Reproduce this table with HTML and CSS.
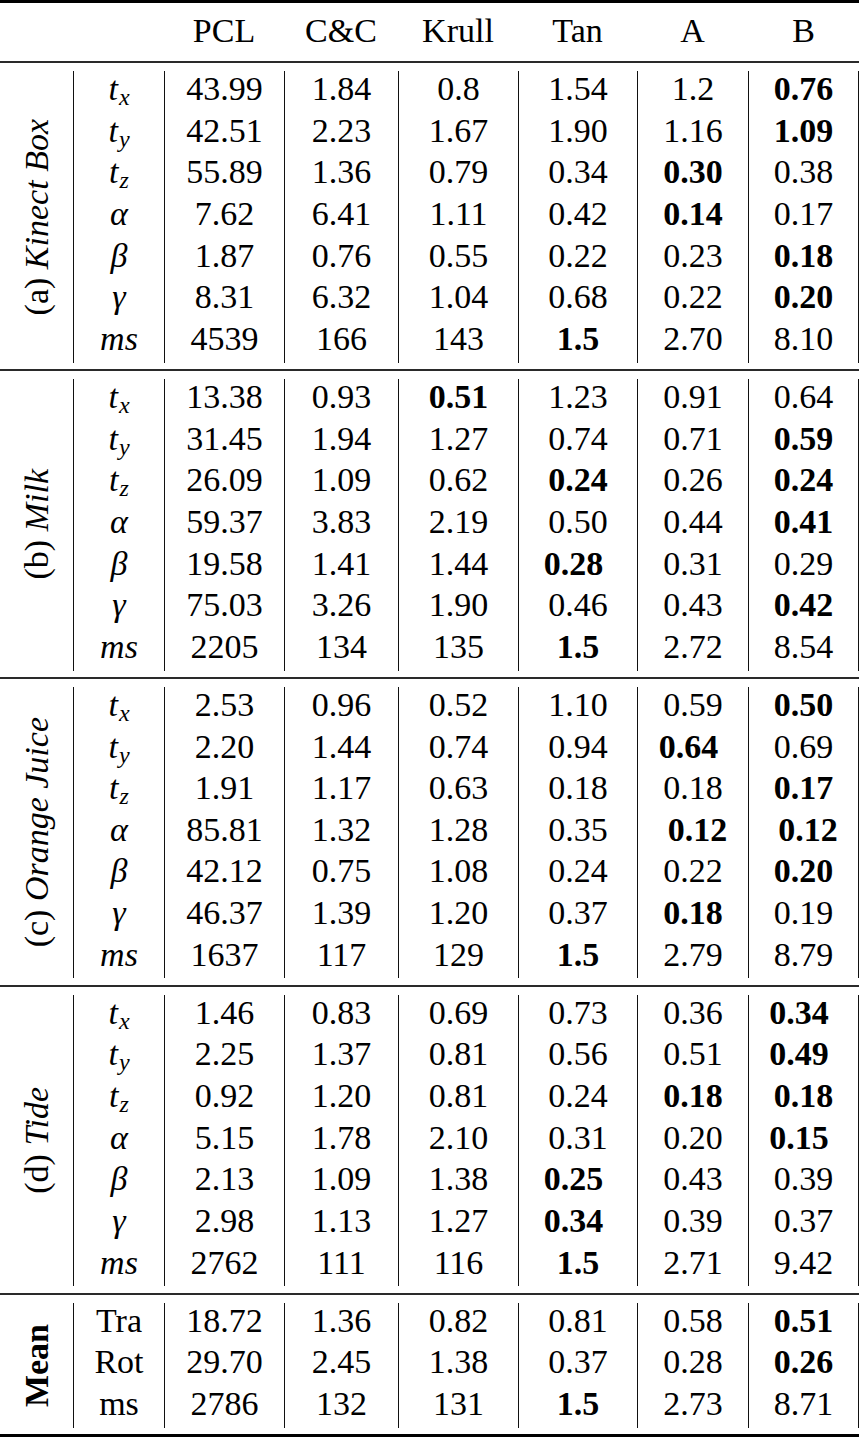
FILE: index.html
```html
<!DOCTYPE html>
<html lang="en">
<head>
<meta charset="utf-8">
<title>Pose error table</title>
<link rel="stylesheet" href="styles.css">
</head>
<body>
<div class="tbl">
  <div class="head">
    <div class="h"></div><div class="h"></div>
    <div class="h">PCL</div><div class="h">C&amp;C</div><div class="h">Krull</div>
    <div class="h">Tan</div><div class="h">A</div><div class="h">B</div>
  </div>

  <section class="grp">
    <div class="lab"><span class="rot">(a) <i>Kinect Box</i></span></div>
    <div class="col rl">
      <div class="c"><i>t</i><sub>x</sub></div><div class="c"><i>t</i><sub>y</sub></div><div class="c"><i>t</i><sub>z</sub></div>
      <div class="c"><i>α</i></div><div class="c"><i>β</i></div><div class="c"><i>γ</i></div><div class="c"><i>ms</i></div>
    </div>
    <div class="col"><div class="c">43.99</div><div class="c">42.51</div><div class="c">55.89</div><div class="c">7.62</div><div class="c">1.87</div><div class="c">8.31</div><div class="c">4539</div></div>
    <div class="col"><div class="c">1.84</div><div class="c">2.23</div><div class="c">1.36</div><div class="c">6.41</div><div class="c">0.76</div><div class="c">6.32</div><div class="c">166</div></div>
    <div class="col"><div class="c">0.8</div><div class="c">1.67</div><div class="c">0.79</div><div class="c">1.11</div><div class="c">0.55</div><div class="c">1.04</div><div class="c">143</div></div>
    <div class="col"><div class="c">1.54</div><div class="c">1.90</div><div class="c">0.34</div><div class="c">0.42</div><div class="c">0.22</div><div class="c">0.68</div><div class="c"><b>1.5</b></div></div>
    <div class="col"><div class="c">1.2</div><div class="c">1.16</div><div class="c"><b>0.30</b></div><div class="c"><b>0.14</b></div><div class="c">0.23</div><div class="c">0.22</div><div class="c">2.70</div></div>
    <div class="col last"><div class="c"><b>0.76</b></div><div class="c"><b>1.09</b></div><div class="c">0.38</div><div class="c">0.17</div><div class="c"><b>0.18</b></div><div class="c"><b>0.20</b></div><div class="c">8.10</div></div>
  </section>

  <section class="grp">
    <div class="lab"><span class="rot">(b) <i>Milk</i></span></div>
    <div class="col rl">
      <div class="c"><i>t</i><sub>x</sub></div><div class="c"><i>t</i><sub>y</sub></div><div class="c"><i>t</i><sub>z</sub></div>
      <div class="c"><i>α</i></div><div class="c"><i>β</i></div><div class="c"><i>γ</i></div><div class="c"><i>ms</i></div>
    </div>
    <div class="col"><div class="c">13.38</div><div class="c">31.45</div><div class="c">26.09</div><div class="c">59.37</div><div class="c">19.58</div><div class="c">75.03</div><div class="c">2205</div></div>
    <div class="col"><div class="c">0.93</div><div class="c">1.94</div><div class="c">1.09</div><div class="c">3.83</div><div class="c">1.41</div><div class="c">3.26</div><div class="c">134</div></div>
    <div class="col"><div class="c"><b>0.51</b></div><div class="c">1.27</div><div class="c">0.62</div><div class="c">2.19</div><div class="c">1.44</div><div class="c">1.90</div><div class="c">135</div></div>
    <div class="col"><div class="c">1.23</div><div class="c">0.74</div><div class="c"><b>0.24</b></div><div class="c">0.50</div><div class="c sl"><b>0.28</b></div><div class="c">0.46</div><div class="c"><b>1.5</b></div></div>
    <div class="col"><div class="c">0.91</div><div class="c">0.71</div><div class="c">0.26</div><div class="c">0.44</div><div class="c">0.31</div><div class="c">0.43</div><div class="c">2.72</div></div>
    <div class="col last"><div class="c">0.64</div><div class="c"><b>0.59</b></div><div class="c"><b>0.24</b></div><div class="c"><b>0.41</b></div><div class="c">0.29</div><div class="c"><b>0.42</b></div><div class="c">8.54</div></div>
  </section>

  <section class="grp">
    <div class="lab"><span class="rot">(c) <i>Orange Juice</i></span></div>
    <div class="col rl">
      <div class="c"><i>t</i><sub>x</sub></div><div class="c"><i>t</i><sub>y</sub></div><div class="c"><i>t</i><sub>z</sub></div>
      <div class="c"><i>α</i></div><div class="c"><i>β</i></div><div class="c"><i>γ</i></div><div class="c"><i>ms</i></div>
    </div>
    <div class="col"><div class="c">2.53</div><div class="c">2.20</div><div class="c">1.91</div><div class="c">85.81</div><div class="c">42.12</div><div class="c">46.37</div><div class="c">1637</div></div>
    <div class="col"><div class="c">0.96</div><div class="c">1.44</div><div class="c">1.17</div><div class="c">1.32</div><div class="c">0.75</div><div class="c">1.39</div><div class="c">117</div></div>
    <div class="col"><div class="c">0.52</div><div class="c">0.74</div><div class="c">0.63</div><div class="c">1.28</div><div class="c">1.08</div><div class="c">1.20</div><div class="c">129</div></div>
    <div class="col"><div class="c">1.10</div><div class="c">0.94</div><div class="c">0.18</div><div class="c">0.35</div><div class="c">0.24</div><div class="c">0.37</div><div class="c"><b>1.5</b></div></div>
    <div class="col"><div class="c">0.59</div><div class="c sl"><b>0.64</b></div><div class="c">0.18</div><div class="c sr"><b>0.12</b></div><div class="c">0.22</div><div class="c"><b>0.18</b></div><div class="c">2.79</div></div>
    <div class="col last"><div class="c"><b>0.50</b></div><div class="c">0.69</div><div class="c"><b>0.17</b></div><div class="c sr"><b>0.12</b></div><div class="c"><b>0.20</b></div><div class="c">0.19</div><div class="c">8.79</div></div>
  </section>

  <section class="grp">
    <div class="lab"><span class="rot">(d) <i>Tide</i></span></div>
    <div class="col rl">
      <div class="c"><i>t</i><sub>x</sub></div><div class="c"><i>t</i><sub>y</sub></div><div class="c"><i>t</i><sub>z</sub></div>
      <div class="c"><i>α</i></div><div class="c"><i>β</i></div><div class="c"><i>γ</i></div><div class="c"><i>ms</i></div>
    </div>
    <div class="col"><div class="c">1.46</div><div class="c">2.25</div><div class="c">0.92</div><div class="c">5.15</div><div class="c">2.13</div><div class="c">2.98</div><div class="c">2762</div></div>
    <div class="col"><div class="c">0.83</div><div class="c">1.37</div><div class="c">1.20</div><div class="c">1.78</div><div class="c">1.09</div><div class="c">1.13</div><div class="c">111</div></div>
    <div class="col"><div class="c">0.69</div><div class="c">0.81</div><div class="c">0.81</div><div class="c">2.10</div><div class="c">1.38</div><div class="c">1.27</div><div class="c">116</div></div>
    <div class="col"><div class="c">0.73</div><div class="c">0.56</div><div class="c">0.24</div><div class="c">0.31</div><div class="c sl"><b>0.25</b></div><div class="c sl"><b>0.34</b></div><div class="c"><b>1.5</b></div></div>
    <div class="col"><div class="c">0.36</div><div class="c">0.51</div><div class="c"><b>0.18</b></div><div class="c">0.20</div><div class="c">0.43</div><div class="c">0.39</div><div class="c">2.71</div></div>
    <div class="col last"><div class="c sl"><b>0.34</b></div><div class="c sl"><b>0.49</b></div><div class="c"><b>0.18</b></div><div class="c sl"><b>0.15</b></div><div class="c">0.39</div><div class="c">0.37</div><div class="c">9.42</div></div>
  </section>

  <section class="grp">
    <div class="lab"><span class="rot"><b>Mean</b></span></div>
    <div class="col rl"><div class="c">Tra</div><div class="c">Rot</div><div class="c">ms</div></div>
    <div class="col"><div class="c">18.72</div><div class="c">29.70</div><div class="c">2786</div></div>
    <div class="col"><div class="c">1.36</div><div class="c">2.45</div><div class="c">132</div></div>
    <div class="col"><div class="c">0.82</div><div class="c">1.38</div><div class="c">131</div></div>
    <div class="col"><div class="c">0.81</div><div class="c">0.37</div><div class="c"><b>1.5</b></div></div>
    <div class="col"><div class="c">0.58</div><div class="c">0.28</div><div class="c">2.73</div></div>
    <div class="col last"><div class="c"><b>0.51</b></div><div class="c"><b>0.26</b></div><div class="c">8.71</div></div>
  </section>
</div>
</body>
</html>
```

FILE: styles.css
```css
html, body {
  margin: 0;
  padding: 0;
  background: #ffffff;
}

body,
.tbl,
.h,
.c,
.rot {
  font-family: "Liberation Serif", "DejaVu Serif", "Times New Roman", Times, serif;
}

body {
  font-size: 34px;
  color: #000000;
}

.tbl {
  width: 859px;
  border-top: 3px solid #000000;
  border-bottom: 3px solid #000000;
}

.head,
.grp {
  display: grid;
  grid-template-columns: 73px 91px 120px 114px 120px 119px 111px 111px;
}

.head {
  box-sizing: border-box;
  height: 58px;
  padding-top: 10px;
}

.h {
  line-height: 35px;
  text-align: center;
  white-space: nowrap;
}

.grp {
  border-top: 2px solid #2a2a2a;
  padding: 8px 0 6.33px;
}

.lab {
  display: flex;
  align-items: center;
  justify-content: center;
}

.rot {
  writing-mode: vertical-rl;
  transform: rotate(180deg);
  white-space: nowrap;
  line-height: 1;
}

.rot b {
  font-weight: bold;
}

.col {
  box-sizing: border-box;
  border-left: 1px solid #111111;
}

.col.last {
  border-right: 1px solid #111111;
}

.c {
  height: 41.67px;
  line-height: 35px;
  text-align: center;
  white-space: nowrap;
}

.c b {
  font-weight: bold;
}

.c sub {
  font-style: italic;
  font-size: 24px;
  line-height: 0;
  vertical-align: -5px;
  margin-left: 1px;
}

.sl {
  padding-right: 9px;
  box-sizing: border-box;
}

.sr {
  padding-left: 9px;
  box-sizing: border-box;
}
```
